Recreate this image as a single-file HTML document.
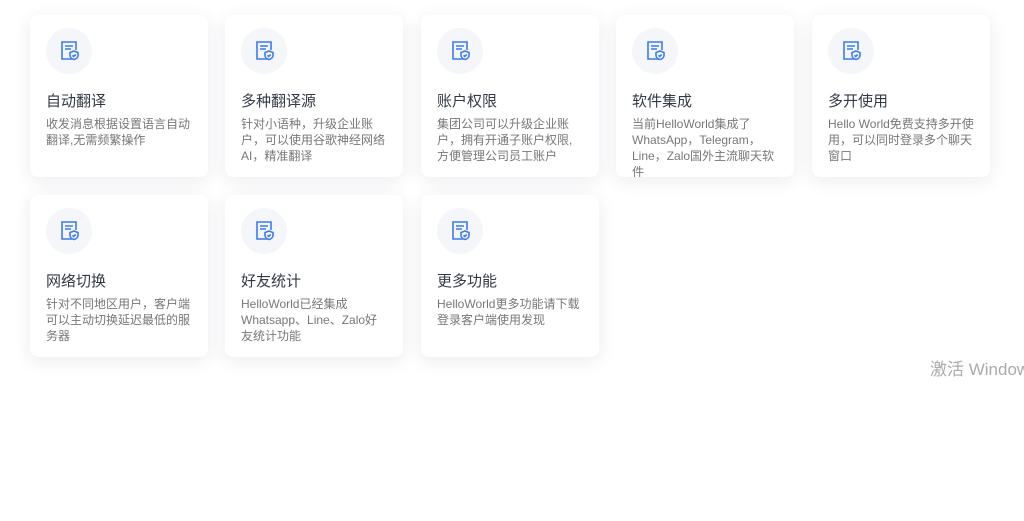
<!DOCTYPE html>
<html><head><meta charset="utf-8"><style>
body{margin:0;width:1024px;height:521px;background:#fff;font-family:"Liberation Sans","Noto Sans CJK SC",sans-serif;overflow:hidden;position:relative}
.c{position:absolute;width:178px;height:162px;background:#fff;border-radius:8px;box-shadow:0 4px 18px rgba(30,40,80,0.09);overflow:hidden}
.ic{position:absolute;left:16px;top:13px;width:46px;height:46px;border-radius:50%;background:#f4f6fa}
.ic svg{position:absolute;left:13px;top:12px}
.t{position:absolute;left:16px;top:75px;font-size:15px;color:#333a45}
.d{position:absolute;left:16px;top:101px;width:146px;font-size:12px;line-height:16px;color:#777}
.w{position:absolute;left:930px;top:355px;font-size:17px;color:#aaa;white-space:nowrap}
</style></head><body>
<div class="c" style="left:30px;top:15px"><div class="ic"><svg width="22" height="22" viewBox="0 0 22 22" fill="none" stroke="#3b7cf0" stroke-width="1.6"><path d="M13 19H3V2h14v8"/><path d="M6 6h8M6 9h6"/><path d="M15 11l4 1.5v3c0 2-2 3.5-4 4-2-.5-4-2-4-4v-3z"/><path d="M13.5 15.3l1.2 1.2 2-2"/></svg></div><div class="t">自动翻译</div><div class="d">收发消息根据设置语言自动翻译,无需频繁操作</div></div>
<div class="c" style="left:225px;top:15px"><div class="ic"><svg width="22" height="22" viewBox="0 0 22 22" fill="none" stroke="#3b7cf0" stroke-width="1.6"><path d="M13 19H3V2h14v8"/><path d="M6 6h8M6 9h6"/><path d="M15 11l4 1.5v3c0 2-2 3.5-4 4-2-.5-4-2-4-4v-3z"/><path d="M13.5 15.3l1.2 1.2 2-2"/></svg></div><div class="t">多种翻译源</div><div class="d">针对小语种，升级企业账户，可以使用谷歌神经网络AI，精准翻译</div></div>
<div class="c" style="left:421px;top:15px"><div class="ic"><svg width="22" height="22" viewBox="0 0 22 22" fill="none" stroke="#3b7cf0" stroke-width="1.6"><path d="M13 19H3V2h14v8"/><path d="M6 6h8M6 9h6"/><path d="M15 11l4 1.5v3c0 2-2 3.5-4 4-2-.5-4-2-4-4v-3z"/><path d="M13.5 15.3l1.2 1.2 2-2"/></svg></div><div class="t">账户权限</div><div class="d">集团公司可以升级企业账户，拥有开通子账户权限,方便管理公司员工账户</div></div>
<div class="c" style="left:616px;top:15px"><div class="ic"><svg width="22" height="22" viewBox="0 0 22 22" fill="none" stroke="#3b7cf0" stroke-width="1.6"><path d="M13 19H3V2h14v8"/><path d="M6 6h8M6 9h6"/><path d="M15 11l4 1.5v3c0 2-2 3.5-4 4-2-.5-4-2-4-4v-3z"/><path d="M13.5 15.3l1.2 1.2 2-2"/></svg></div><div class="t">软件集成</div><div class="d">当前HelloWorld集成了WhatsApp，Telegram，Line，Zalo国外主流聊天软件</div></div>
<div class="c" style="left:812px;top:15px"><div class="ic"><svg width="22" height="22" viewBox="0 0 22 22" fill="none" stroke="#3b7cf0" stroke-width="1.6"><path d="M13 19H3V2h14v8"/><path d="M6 6h8M6 9h6"/><path d="M15 11l4 1.5v3c0 2-2 3.5-4 4-2-.5-4-2-4-4v-3z"/><path d="M13.5 15.3l1.2 1.2 2-2"/></svg></div><div class="t">多开使用</div><div class="d">Hello World免费支持多开使用，可以同时登录多个聊天窗口</div></div>
<div class="c" style="left:30px;top:195px"><div class="ic"><svg width="22" height="22" viewBox="0 0 22 22" fill="none" stroke="#3b7cf0" stroke-width="1.6"><path d="M13 19H3V2h14v8"/><path d="M6 6h8M6 9h6"/><path d="M15 11l4 1.5v3c0 2-2 3.5-4 4-2-.5-4-2-4-4v-3z"/><path d="M13.5 15.3l1.2 1.2 2-2"/></svg></div><div class="t">网络切换</div><div class="d">针对不同地区用户，客户端可以主动切换延迟最低的服务器</div></div>
<div class="c" style="left:225px;top:195px"><div class="ic"><svg width="22" height="22" viewBox="0 0 22 22" fill="none" stroke="#3b7cf0" stroke-width="1.6"><path d="M13 19H3V2h14v8"/><path d="M6 6h8M6 9h6"/><path d="M15 11l4 1.5v3c0 2-2 3.5-4 4-2-.5-4-2-4-4v-3z"/><path d="M13.5 15.3l1.2 1.2 2-2"/></svg></div><div class="t">好友统计</div><div class="d">HelloWorld已经集成Whatsapp、Line、Zalo好友统计功能</div></div>
<div class="c" style="left:421px;top:195px"><div class="ic"><svg width="22" height="22" viewBox="0 0 22 22" fill="none" stroke="#3b7cf0" stroke-width="1.6"><path d="M13 19H3V2h14v8"/><path d="M6 6h8M6 9h6"/><path d="M15 11l4 1.5v3c0 2-2 3.5-4 4-2-.5-4-2-4-4v-3z"/><path d="M13.5 15.3l1.2 1.2 2-2"/></svg></div><div class="t">更多功能</div><div class="d">HelloWorld更多功能请下载登录客户端使用发现</div></div>
<div class="w">激活 Windows</div>
</body></html>
